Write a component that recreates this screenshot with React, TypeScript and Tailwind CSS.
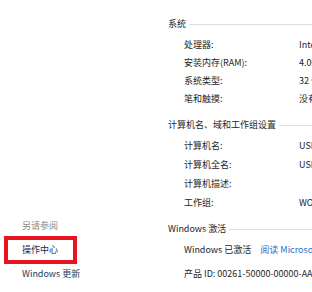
import React from "react";

const font = { fontFamily: '"Noto Sans CJK SC", "Noto Sans", sans-serif' };

function Heading({ text }: { text: string }) {
  return (
    <div className="flex items-center h-[18px] leading-[18px] text-[#1e1e1e]">
      <span className="whitespace-nowrap">{text}</span>
      <div className="flex-1 h-px ml-[3px] mt-[1px] bg-[#dedede]" />
    </div>
  );
}

function Row({ label, value, h = "h-[18px]" }: { label: string; value?: React.ReactNode; h?: string }) {
  return (
    <div className={`flex ${h} leading-[18px] pl-4 text-[#1e1e1e] whitespace-nowrap`}>
      <span className="w-[115px] shrink-0">{label}</span>
      <span>{value}</span>
    </div>
  );
}

export default function App() {
  return (
    <div className="w-[312px] h-[292px] bg-white overflow-hidden flex text-[9px]" style={font}>
      {/* left nav */}
      <div className="w-[168px] shrink-0 flex flex-col">
        <div className="-mt-[12px] flex items-center h-[14px] pl-[6px] text-[#1e395b]">
          <svg width="8" height="10" viewBox="0 0 8 10" className="mr-2">
            <path d="M4 0 L8 1.5 V5 C8 7.5 6 9 4 10 C2 9 0 7.5 0 5 V1.5 Z" fill="#4a7ab8" />
            <path d="M4 0 V10 C6 9 8 7.5 8 5 V1.5 Z" fill="#e8b830" />
          </svg>
          <span>高级系统设置</span>
        </div>
        <div className="mt-auto mb-[9px] flex flex-col">
          <div className="pl-[22px] h-[19px] leading-[18px] text-[#8a8a8a]">另请参阅</div>
          <div className="ml-1 w-[73px] h-[28px] border-4 border-[#e5141f] pl-[14px] leading-[20px] text-[#1b2b4b]">
            操作中心
          </div>
          <div className="pl-[22px] h-[19px] leading-[20px] text-[#1e395b]">Windows 更新</div>
        </div>
      </div>

      {/* right panel */}
      <div className="flex-1 flex flex-col pt-[15px]">
        <Heading text="系统" />
        <div className="mt-[3px]">
          <Row label="处理器:" value="Intel(R) Core(TM)" />
          <Row label="安装内存(RAM):" value="4.00 GB" />
          <Row label="系统类型:" value="32 位操作系统" />
          <Row label="笔和触摸:" value="没有可用于此显示器的笔或触控输入" />
        </div>
        <div className="mt-[8px]">
          <Heading text="计算机名、域和工作组设置" />
        </div>
        <div className="mt-[3px]">
          <Row h="h-[19px]" label="计算机名:" value="USER-PC" />
          <Row h="h-[19px]" label="计算机全名:" value="USER-PC" />
          <Row h="h-[19px]" label="计算机描述:" />
          <Row h="h-[19px]" label="工作组:" value="WORKGROUP" />
        </div>
        <div className="mt-[7px]">
          <Heading text="Windows 激活" />
        </div>
        <div className="mt-[3px] pl-4 flex flex-col text-[#1e1e1e] whitespace-nowrap">
          <div className="h-[24px] leading-[18px]">
            Windows 已激活<span className="ml-[9px] text-[#2a6fc9]">阅读 Microsoft 软件许可条款</span>
          </div>
          <div className="h-[18px] leading-[18px]">产品 ID: 00261-50000-00000-AA442</div>
        </div>
      </div>
    </div>
  );
}
